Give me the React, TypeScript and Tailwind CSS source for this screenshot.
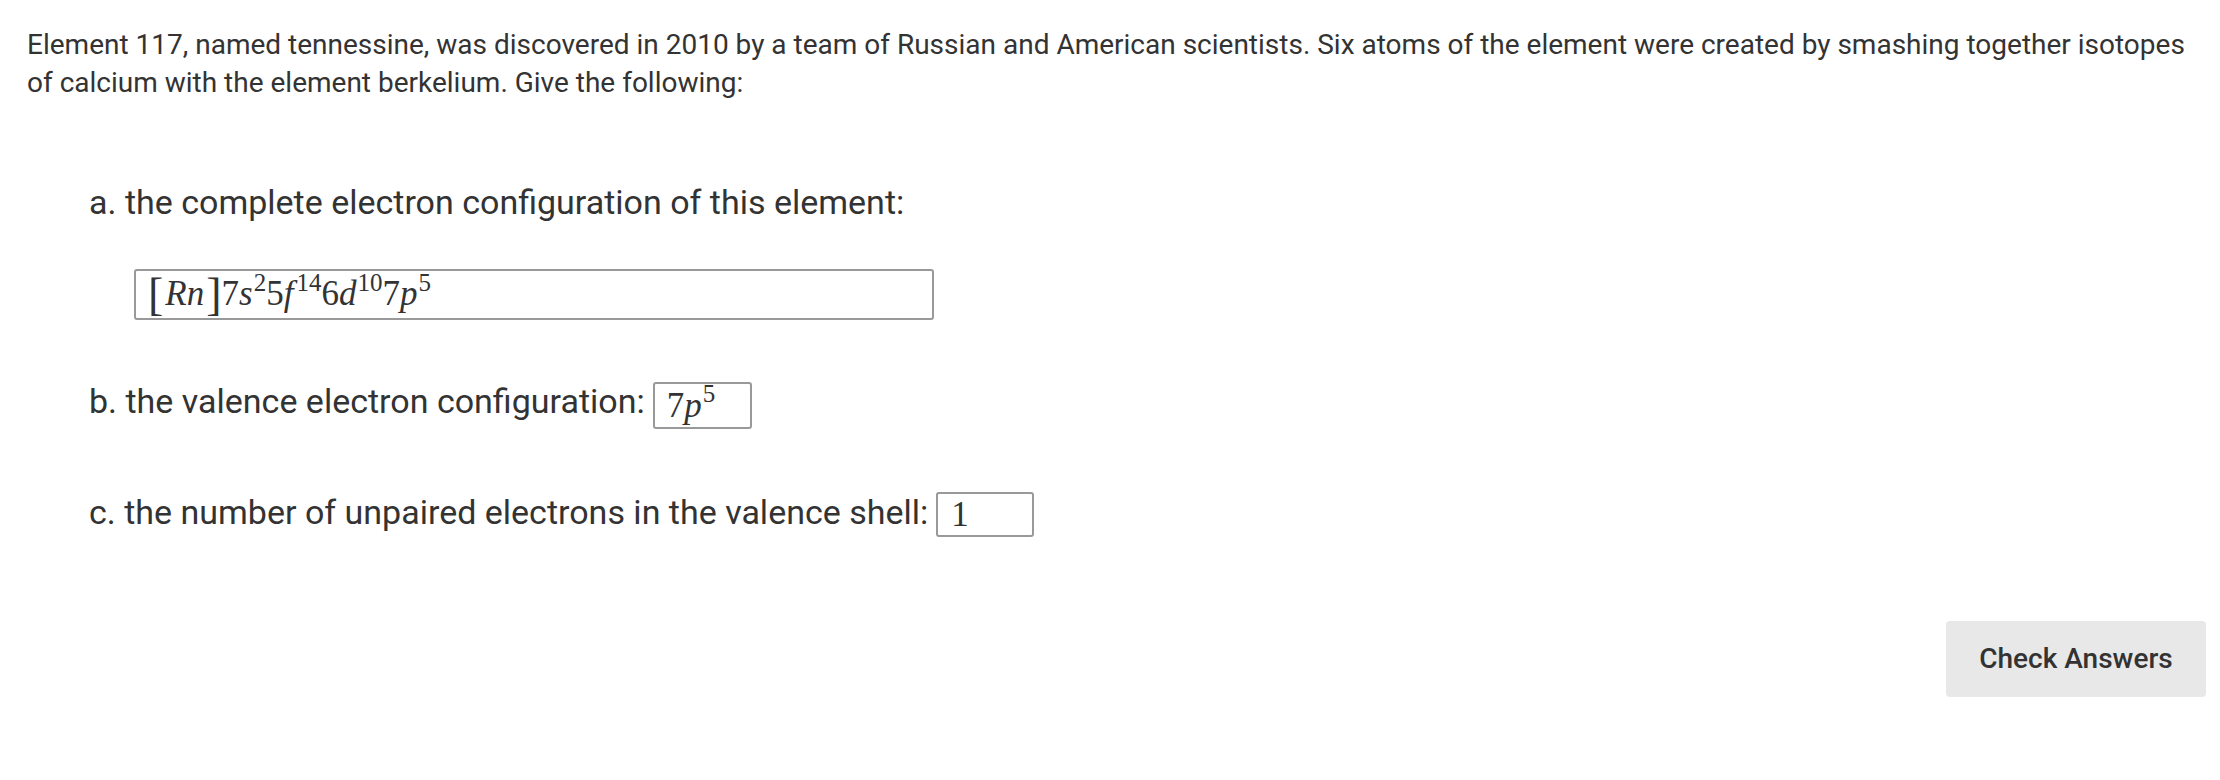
import React from 'react';

const Sup: React.FC<{ children: React.ReactNode }> = ({ children }) => (
  <span className="relative -top-[12px] ml-[1px] text-[25px] not-italic">{children}</span>
);

const Var: React.FC<{ children: React.ReactNode }> = ({ children }) => (
  <span className="italic">{children}</span>
);

const App: React.FC = () => {
  return (
    <div className="min-h-[780px] bg-white text-[#333] font-['Roboto',sans-serif]">
      {/* Prompt */}
      <p className="px-[27px] pt-[26px] text-[28px] leading-[38px]">
        Element 117, named tennessine, was discovered in 2010 by a team of Russian and American scientists. Six atoms of the element were created by smashing together isotopes of calcium with the element berkelium. Give the following:
      </p>

      {/* Questions */}
      <div className="pl-[89px] pt-[78px] text-[34px]">
        <div className="leading-[44px]">a. the complete electron configuration of this element:</div>

        <div className="mt-[45px] ml-[45px] flex h-[51px] w-[800px] items-center rounded-[3px] border-2 border-[#999] px-[12px] font-['Liberation_Serif',serif] text-[35px]">
          <span className="mr-[2px] text-[46px] font-light leading-none">[</span>
          <Var>Rn</Var>
          <span className="ml-[2px] text-[46px] font-light leading-none">]</span>
          <span>7</span><Var>s</Var><Sup>2</Sup>
          <span>5</span><span className="mr-[2px] italic">f</span><Sup>14</Sup>
          <span>6</span><Var>d</Var><Sup>10</Sup>
          <span>7</span><Var>p</Var><Sup>5</Sup>
        </div>

        <div className="mt-[59px] flex items-start leading-[44px]">
          <span>b. the valence electron configuration:</span>
          <div className="ml-[8px] mt-[3px] flex h-[47px] w-[99px] items-center rounded-[3px] border-2 border-[#999] px-[12px] font-['Liberation_Serif',serif] text-[35px]">
            <span>7</span><Var>p</Var><Sup>5</Sup>
          </div>
        </div>

        <div className="mt-[61px] flex items-start leading-[44px]">
          <span>c. the number of unpaired electrons in the valence shell:</span>
          <div className="ml-[8px] mt-[2px] flex h-[45px] w-[98px] items-center rounded-[3px] border-2 border-[#999] px-[13px] font-['Liberation_Serif',serif] text-[35px]">
            1
          </div>
        </div>
      </div>

      {/* Action */}
      <div className="flex justify-end pr-[14px] pt-[84px]">
        <button className="h-[76px] w-[260px] rounded-[4px] bg-[#e8e8e8] text-[28px] font-medium text-[#333]">
          Check Answers
        </button>
      </div>
    </div>
  );
};

export default App;
